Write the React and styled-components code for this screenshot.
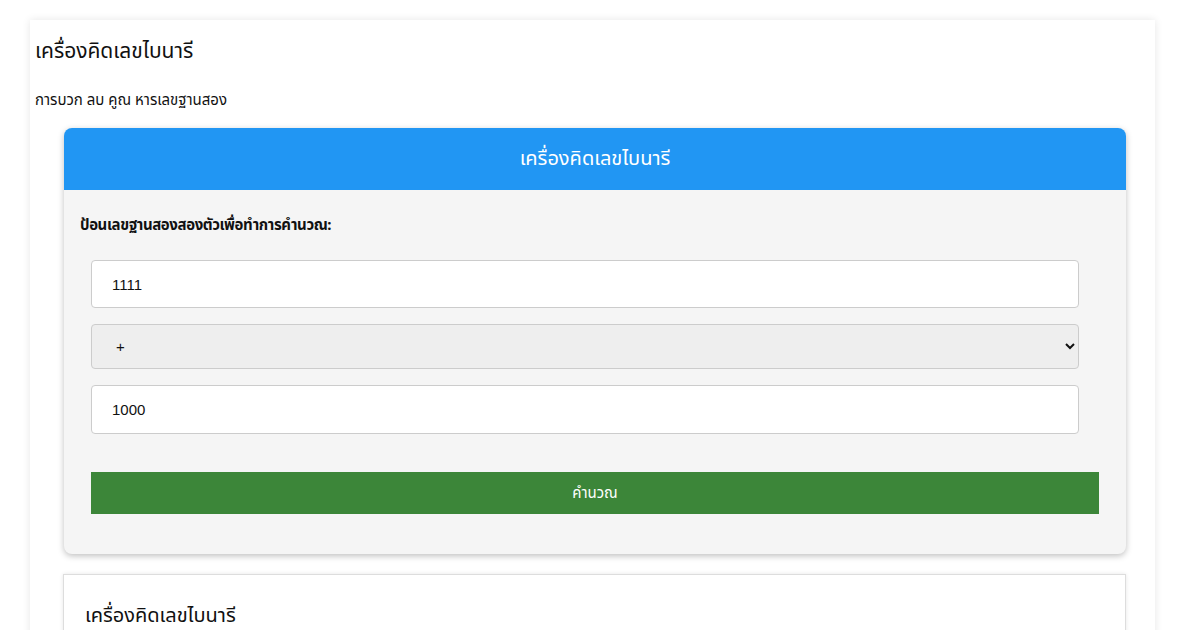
import styled, { createGlobalStyle } from 'styled-components';

const GlobalStyle = createGlobalStyle`
  body {
    margin: 0;
    background: #fff;
    font-family: 'Noto Sans', 'Noto Sans Thai', sans-serif;
    color: #111;
  }
`;

const Page = styled.div`
  padding: 20px 45px 40px 30px;
`;

const Container = styled.div`
  background: #fff;
  padding: 6px 29px 30px 5px;
  box-shadow: 0 0 8px rgba(0, 0, 0, 0.1);
`;

const Title = styled.h1`
  margin: 6px 0 0 0;
  font-size: 21px;
  font-weight: 400;
  line-height: 36px;
`;

const Subtitle = styled.p`
  margin: 18px 0 0 0;
  font-size: 15px;
  line-height: 26px;
`;

const Card = styled.div`
  margin: 16px 0 0 29px;
  border-radius: 8px;
  background: #f5f5f5;
  box-shadow: 0 2px 6px rgba(0, 0, 0, 0.25);
  overflow: hidden;
`;

const CardHeader = styled.div`
  height: 62px;
  background: #2196f3;
  color: #fff;
  display: flex;
  align-items: center;
  justify-content: center;
  font-size: 20px;
`;

const CardBody = styled.form`
  padding: 22px 16px 40px 16px;
`;

const Label = styled.label`
  display: block;
  font-weight: 700;
  font-size: 15px;
  line-height: 24px;
  letter-spacing: -0.4px;
`;

const Fields = styled.div`
  display: flex;
  flex-direction: column;
  gap: 16px;
  padding: 24px 11px 0 11px;
`;

const Input = styled.input`
  box-sizing: border-box;
  width: calc(100% - 20px);
  height: ${(p) => p.$h || 48}px;
  padding: 0 20px;
  border: 1px solid #ccc;
  border-radius: 4px;
  background: #fff;
  font-family: 'Liberation Sans', Arial, sans-serif;
  font-size: 15px;
  color: #111;
`;

const Select = styled.select`
  box-sizing: border-box;
  width: calc(100% - 20px);
  height: 45px;
  padding: 0 20px;
  border: 1px solid #ccc;
  border-radius: 4px;
  background: #eee;
  font-family: 'Liberation Sans', Arial, sans-serif;
  font-size: 15px;
  color: #111;
`;

const Button = styled.button`
  margin-top: 22px;
  height: 42px;
  border: none;
  background: #3c8639;
  color: #fff;
  font-family: 'Noto Sans', 'Noto Sans Thai', sans-serif;
  font-size: 15px;
`;

const ResultCard = styled.div`
  margin: 20px 0 0 28px;
  background: #fff;
  border: 1px solid #ddd;
  box-shadow: 0 0 4px rgba(0, 0, 0, 0.1);
  padding: 24px 21px 300px 21px;
`;

const ResultTitle = styled.h2`
  margin: 0;
  font-size: 20px;
  font-weight: 400;
  line-height: 32px;
`;

export default function App() {
  return (
    <Page>
      <GlobalStyle />
      <Container>
        <Title>เครื่องคิดเลขไบนารี</Title>
        <Subtitle>การบวก ลบ คูณ หารเลขฐานสอง</Subtitle>
        <Card>
          <CardHeader>เครื่องคิดเลขไบนารี</CardHeader>
          <CardBody onSubmit={(e) => e.preventDefault()}>
            <Label>ป้อนเลขฐานสองสองตัวเพื่อทำการคำนวณ:</Label>
            <Fields>
              <Input defaultValue="1111" />
              <Select defaultValue="+">
                <option value="+">+</option>
                <option value="-">-</option>
                <option value="*">*</option>
                <option value="/">/</option>
              </Select>
              <Input defaultValue="1000" $h={49} />
              <Button type="submit">คำนวณ</Button>
            </Fields>
          </CardBody>
        </Card>
        <ResultCard>
          <ResultTitle>เครื่องคิดเลขไบนารี</ResultTitle>
        </ResultCard>
      </Container>
    </Page>
  );
}
